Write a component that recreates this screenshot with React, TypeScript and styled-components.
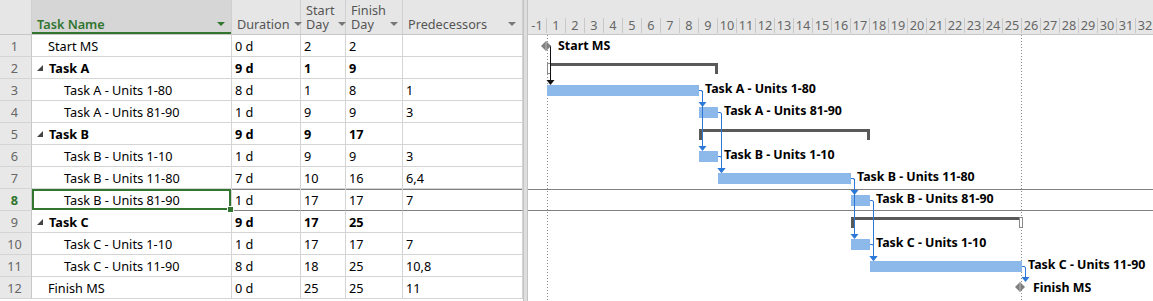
import React from 'react';
import styled, { createGlobalStyle } from 'styled-components';

const GlobalStyle = createGlobalStyle`
  html, body {
    margin: 0;
    padding: 0;
    background: #fff;
  }
  body {
    font-family: 'Noto Sans', 'Open Sans', sans-serif;
    font-size: 12.7px;
    color: #000;
    overflow: hidden;
  }
`;

const COLS = '32px 200px 69px 45px 57px 120px';
const ROW_H = 22;
const DAY_W = 19;
const GREEN = '#31752f';

type Task = {
  id: number;
  name: string;
  dur: string;
  start: number;
  finish: number;
  pred: string;
  level: 0 | 1;
  summary?: boolean;
};

const tasks: Task[] = [
  { id: 1, name: 'Start MS', dur: '0 d', start: 2, finish: 2, pred: '', level: 0 },
  { id: 2, name: 'Task A', dur: '9 d', start: 1, finish: 9, pred: '', level: 0, summary: true },
  { id: 3, name: 'Task A - Units 1-80', dur: '8 d', start: 1, finish: 8, pred: '1', level: 1 },
  { id: 4, name: 'Task A - Units 81-90', dur: '1 d', start: 9, finish: 9, pred: '3', level: 1 },
  { id: 5, name: 'Task B', dur: '9 d', start: 9, finish: 17, pred: '', level: 0, summary: true },
  { id: 6, name: 'Task B - Units 1-10', dur: '1 d', start: 9, finish: 9, pred: '3', level: 1 },
  { id: 7, name: 'Task B - Units 11-80', dur: '7 d', start: 10, finish: 16, pred: '6,4', level: 1 },
  { id: 8, name: 'Task B - Units 81-90', dur: '1 d', start: 17, finish: 17, pred: '7', level: 1 },
  { id: 9, name: 'Task C', dur: '9 d', start: 17, finish: 25, pred: '', level: 0, summary: true },
  { id: 10, name: 'Task C - Units 1-10', dur: '1 d', start: 17, finish: 17, pred: '7', level: 1 },
  { id: 11, name: 'Task C - Units 11-90', dur: '8 d', start: 18, finish: 25, pred: '10,8', level: 1 },
  { id: 12, name: 'Finish MS', dur: '0 d', start: 25, finish: 25, pred: '11', level: 0 },
];

const SELECTED = 8;
const days = [-1, ...Array.from({ length: 32 }, (_, i) => i + 1)];

const Page = styled.div`
  display: flex;
  width: 1153px;
  height: 301px;
  overflow: hidden;
`;

const Sheet = styled.div`
  width: 523px;
  flex: none;
  display: flex;
  flex-direction: column;
`;

const HeaderRow = styled.div`
  display: grid;
  grid-template-columns: ${COLS};
  height: 35px;
  background: #e6e6e6;
  border-bottom: 1px solid #c6c6c6;
  box-sizing: border-box;
`;

const HeadCell = styled.div<{ $active?: boolean }>`
  display: flex;
  align-items: flex-end;
  justify-content: space-between;
  padding: 0 6px 3px 5px;
  border-right: 1px solid #d0d0d0;
  background: ${(p) => (p.$active ? '#d6d6d6' : 'transparent')};
  box-shadow: ${(p) => (p.$active ? `inset 0 -2px ${GREEN}` : 'none')};
  color: ${(p) => (p.$active ? GREEN : '#555')};
  font-weight: ${(p) => (p.$active ? 600 : 400)};
  line-height: 14px;
  min-width: 0;
`;

const HeadText = styled.span`
  white-space: pre-line;
`;

const DropArrow = styled.span<{ $color?: string }>`
  flex: none;
  width: 0;
  height: 0;
  margin: 0 0 5px 4px;
  border-left: 4px solid transparent;
  border-right: 4px solid transparent;
  border-top: 4px solid ${(p) => p.$color || '#777'};
`;

const StackedHead = styled.div`
  display: flex;
  align-items: flex-end;
`;

const Row = styled.div`
  display: grid;
  grid-template-columns: ${COLS};
  height: ${ROW_H}px;
`;

const NumCell = styled.div<{ $sel?: boolean }>`
  background: #e8e8e8;
  border-right: 1px solid #c8c8c8;
  border-bottom: 1px solid #d4d4d4;
  color: ${(p) => (p.$sel ? GREEN : '#666')};
  font-weight: ${(p) => (p.$sel ? 700 : 400)};
  display: flex;
  align-items: center;
  justify-content: center;
  padding-right: 2px;
  box-sizing: border-box;
`;

const Cell = styled.div<{ $bold?: boolean; $sel?: boolean; $indent?: number }>`
  position: relative;
  display: flex;
  align-items: center;
  gap: 6px;
  padding-left: ${(p) => p.$indent ?? 3}px;
  border-right: 1px solid #d4d4d4;
  border-bottom: 1px solid ${(p) => (p.$sel ? '#808080' : '#d4d4d4')};
  box-shadow: ${(p) => (p.$sel ? 'inset 0 1px #808080' : 'none')};
  font-weight: ${(p) => (p.$bold ? 700 : 400)};
  white-space: nowrap;
  overflow: visible;
  box-sizing: border-box;
`;

const ActiveCell = styled(Cell)`
  box-shadow: inset 0 0 0 2px ${GREEN};
  border-bottom-color: transparent;
`;

const FillHandle = styled.span`
  position: absolute;
  right: -3px;
  bottom: -3px;
  width: 5px;
  height: 5px;
  background: ${GREEN};
  border: 1px solid #fff;
  z-index: 2;
`;

const Splitter = styled.div`
  width: 5px;
  flex: none;
  background: #dedede;
  border-left: 1px solid #c4c4c4;
  border-right: 1px solid #c4c4c4;
  box-sizing: border-box;
`;

const Chart = styled.div`
  flex: 1;
  display: flex;
  flex-direction: column;
  min-width: 0;
  overflow: hidden;
`;

const ChartHead = styled.div`
  height: 35px;
  background: #e6e6e6;
  border-bottom: 1px solid #c6c6c6;
  box-sizing: border-box;
  display: flex;
  flex-direction: column;
  justify-content: flex-end;
`;

const DayRow = styled.div`
  display: flex;
  height: 15px;
  margin-bottom: 1px;
`;

const DayCell = styled.div`
  flex: none;
  width: ${DAY_W}px;
  box-sizing: border-box;
  border-right: 1px solid #c8c8c8;
  color: #666;
  text-align: center;
  line-height: 15px;
`;

const ChartBody = styled.div`
  position: relative;
  flex: 1;
  display: flex;
  flex-direction: column;
`;

const ChartRow = styled.div<{ $sel?: boolean }>`
  flex: none;
  height: ${ROW_H}px;
  box-shadow: ${(p) => (p.$sel ? 'inset 0 1px #808080, inset 0 -1px #808080' : 'none')};
`;

const Drawing = styled.svg`
  position: absolute;
  left: 0;
  top: 0;
  overflow: visible;
`;

const Label = styled.text`
  font-family: 'Noto Sans', 'Open Sans', sans-serif;
  font-size: 12.4px;
  font-weight: 700;
  fill: #000;
`;

const Expander = () => (
  <svg width="6" height="6" viewBox="0 0 6 6">
    <polygon points="6,0 6,6 0,6" fill="#444" />
  </svg>
);

const BAR = '#8cb9ea';
const LINK = '#2b78d8';
const sx = (d: number) => DAY_W * d;
const ex = (d: number) => DAY_W * (d + 1);
const top = (id: number) => (id - 1) * ROW_H;

const barFor = (t: Task) => {
  if (t.id === 1) return { x0: 18, x1: 18 };
  if (t.id === 12) return { x0: 492, x1: 492 };
  return { x0: sx(t.start), x1: ex(t.finish) };
};

const links: [number, number, string][] = [
  [3, 4, LINK],
  [3, 6, LINK],
  [4, 7, LINK],
  [6, 7, LINK],
  [7, 8, LINK],
  [7, 10, LINK],
  [8, 11, LINK],
  [10, 11, LINK],
  [11, 12, LINK],
];

const Link = ({ from, to, color }: { from: number; to: number; color: string }) => {
  const f = barFor(tasks[from - 1]);
  const x = f.x1 + 3;
  const y0 = top(from) + 11;
  const tip = to === 12 ? top(to) + 5 : top(to) + 6;
  return (
    <g>
      <path
        d={`M${f.x1} ${y0 + 0.5} H${x - 1} Q${x + 0.5} ${y0 + 0.5} ${x + 0.5} ${y0 + 2} V${tip - 4}`}
        fill="none"
        stroke={color}
        strokeWidth={1}
      />
      <polygon points={`${x - 3.5},${tip - 5} ${x + 4.5},${tip - 5} ${x + 0.5},${tip}`} fill={color} />
    </g>
  );
};

const Milestone = ({ cx, cy }: { cx: number; cy: number }) => (
  <g>
    <polygon points={`${cx},${cy - 5} ${cx + 5},${cy} ${cx},${cy + 5} ${cx - 5},${cy}`} fill="#7f7f7f" />
    <line x1={cx} y1={cy - 5} x2={cx} y2={cy + 5} stroke="#b8b8b8" strokeWidth={1} />
  </g>
);

const Summary = ({ t, hollowLeft, hollowRight }: { t: Task; hollowLeft?: boolean; hollowRight?: boolean }) => {
  const { x0, x1 } = barFor(t);
  const y = top(t.id) + 6;
  const cap = (x: number, hollow?: boolean) =>
    hollow ? (
      <rect x={x + 0.5} y={y + 0.5} width={3} height={10} fill="#fff" stroke="#8a8a8a" />
    ) : (
      <rect x={x} y={y} width={3} height={11} fill="#595959" />
    );
  return (
    <g>
      <rect x={x0} y={y} width={x1 - x0} height={3} fill="#595959" />
      {cap(x0, hollowLeft)}
      {cap(x1 - 3, hollowRight)}
    </g>
  );
};

const GanttDrawing = () => (
  <Drawing width={625} height={266}>
    <line x1={19.5} y1={0} x2={19.5} y2={266} stroke="#8a8a8a" strokeDasharray="1 2" />
    <line x1={493.5} y1={0} x2={493.5} y2={266} stroke="#8a8a8a" strokeDasharray="1 2" />

    <Summary t={tasks[1]} hollowLeft />
    <Summary t={tasks[4]} />
    <Summary t={tasks[8]} hollowRight />

    {tasks
      .filter((t) => !t.summary && t.id !== 1 && t.id !== 12)
      .map((t) => {
        const { x0, x1 } = barFor(t);
        return <rect key={t.id} x={x0} y={top(t.id) + 6} width={x1 - x0} height={11} fill={BAR} />;
      })}

    {links.map(([f, t, c]) => (
      <Link key={`${f}-${t}`} from={f} to={t} color={c} />
    ))}

    <path d={`M18 11 H22.5 V${top(3) + 1}`} fill="none" stroke="#111" strokeWidth={1} />
    <polygon points={`${18.5},${top(3) + 1} ${26.5},${top(3) + 1} ${22.5},${top(3) + 6}`} fill="#111" />

    <Milestone cx={18} cy={11} />
    <Milestone cx={492} cy={top(12) + 10} />

    <Label x={30} y={15}>Start MS</Label>
    <Label x={505} y={top(12) + 15}>Finish MS</Label>
    {tasks
      .filter((t) => !t.summary && t.id !== 1 && t.id !== 12)
      .map((t) => (
        <Label key={t.id} x={barFor(t).x1 + 6} y={top(t.id) + 14}>
          {t.name}
        </Label>
      ))}
  </Drawing>
);

const App = () => {
  return (
    <>
      <GlobalStyle />
      <Page>
        <Sheet>
          <HeaderRow>
            <HeadCell />
            <HeadCell $active>
              <HeadText>Task Name</HeadText>
              <DropArrow $color={GREEN} />
            </HeadCell>
            <HeadCell>
              <HeadText>Duration</HeadText>
              <DropArrow />
            </HeadCell>
            <HeadCell>
              <StackedHead>
                <HeadText>{'Start\nDay'}</HeadText>
                <DropArrow />
              </StackedHead>
            </HeadCell>
            <HeadCell>
              <HeadText>{'Finish\nDay'}</HeadText>
              <DropArrow />
            </HeadCell>
            <HeadCell>
              <HeadText>Predecessors</HeadText>
              <DropArrow />
            </HeadCell>
          </HeaderRow>

          {tasks.map((t) => {
            const sel = t.id === SELECTED;
            const indent = t.level === 1 ? 32 : t.summary ? 5 : 16;
            const NameCell = sel ? ActiveCell : Cell;
            return (
              <Row key={t.id}>
                <NumCell $sel={sel}>{t.id}</NumCell>
                <NameCell $bold={t.summary} $sel={sel} $indent={indent}>
                  {t.summary && <Expander />}
                  {t.name}
                  {sel && <FillHandle />}
                </NameCell>
                <Cell $bold={t.summary} $sel={sel}>{t.dur}</Cell>
                <Cell $bold={t.summary} $sel={sel}>{t.start}</Cell>
                <Cell $bold={t.summary} $sel={sel}>{t.finish}</Cell>
                <Cell $sel={sel}>{t.pred}</Cell>
              </Row>
            );
          })}
        </Sheet>

        <Splitter />

        <Chart>
          <ChartHead>
            <DayRow>
              {days.map((d) => (
                <DayCell key={d}>{d}</DayCell>
              ))}
            </DayRow>
          </ChartHead>
          <ChartBody>
            {tasks.map((t) => (
              <ChartRow key={t.id} $sel={t.id === SELECTED} />
            ))}
            <GanttDrawing />
          </ChartBody>
        </Chart>
      </Page>
    </>
  );
};

export default App;
